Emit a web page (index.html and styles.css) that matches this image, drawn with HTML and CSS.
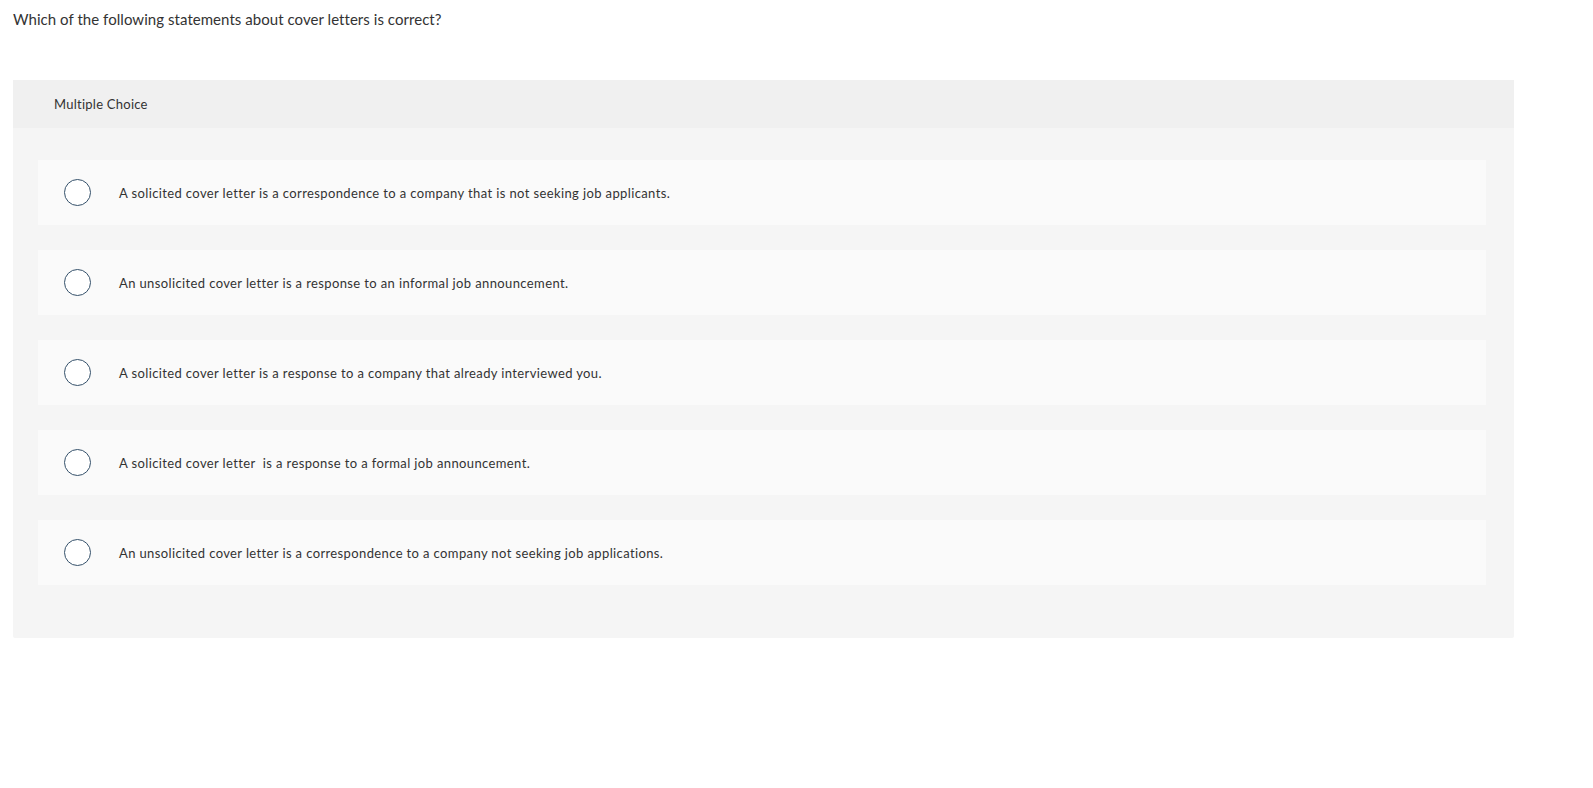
FILE: index.html
```html
<!DOCTYPE html>
<html>
<head>
<meta charset="utf-8">
<link rel="stylesheet" href="styles.css">
</head>
<body>
<div class="page">
  <p class="question">Which of the following statements about cover letters is correct?</p>
  <div class="card">
    <div class="card-head">Multiple Choice</div>
    <div class="options">
      <div class="option"><span class="radio"></span><span class="label">A solicited cover letter is a correspondence to a company that is not seeking job applicants.</span></div>
      <div class="option"><span class="radio"></span><span class="label">An unsolicited cover letter is a response to an informal job announcement.</span></div>
      <div class="option"><span class="radio"></span><span class="label">A solicited cover letter is a response to a company that already interviewed you.</span></div>
      <div class="option"><span class="radio"></span><span class="label">A solicited cover letter&nbsp; is a response to a formal job announcement.</span></div>
      <div class="option"><span class="radio"></span><span class="label">An unsolicited cover letter is a correspondence to a company not seeking job applications.</span></div>
    </div>
  </div>
</div>
</body>
</html>
```

FILE: styles.css
```css
html, body {
  margin: 0;
  padding: 0;
  background: #ffffff;
}
body {
  font-family: Lato, "Open Sans", "Liberation Sans", sans-serif;
  color: #333333;
}
.page {
  padding: 9px 0 0 13px;
}
.question {
  margin: 0;
  font-size: 15px;
  line-height: 20px;
  color: #333333;
  letter-spacing: 0.05px;
}
.card {
  width: 1501px;
  margin-top: 51px;
  background: #f5f5f5;
  border-radius: 2px;
}
.card-head {
  height: 48px;
  background: #f0f0f0;
  display: flex;
  align-items: center;
  padding-left: 41px;
  font-size: 13px;
  letter-spacing: 0.25px;
  color: #333333;
}
.options {
  display: flex;
  flex-direction: column;
  gap: 25px;
  padding: 32px 28px 53px 25px;
}
.option {
  height: 65px;
  background: #fafafa;
  display: flex;
  align-items: center;
  padding-left: 26px;
}
.radio {
  width: 25px;
  height: 25px;
  border: 1.5px solid #34506a;
  border-radius: 50%;
  background: #ffffff;
  flex: none;
}
.label {
  margin-left: 28px;
  font-size: 13px;
  letter-spacing: 0.38px;
  color: #333333;
}
```
